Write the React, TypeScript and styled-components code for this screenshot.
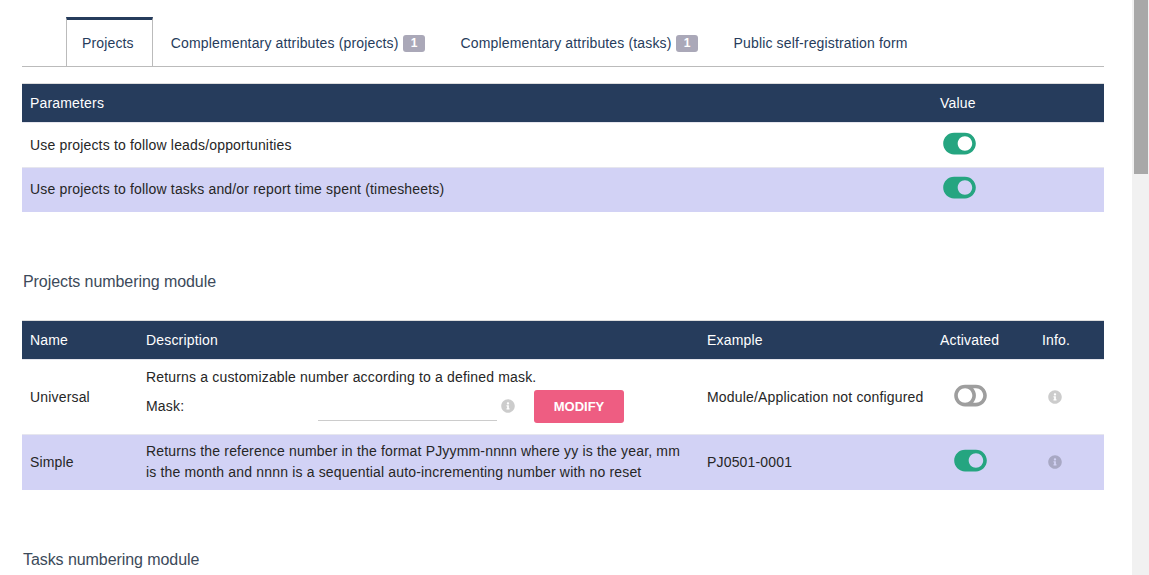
import React from "react";
import styled, { createGlobalStyle } from "styled-components";
import { FaInfoCircle, FaToggleOff, FaToggleOn } from "react-icons/fa";

const GlobalStyle = createGlobalStyle`
  html, body {
    margin: 0;
    height: 100%;
    overflow: hidden;
    background: #fff;
  }
  body {
    font-family: "Liberation Sans", Arial, sans-serif;
    font-size: 14px;
    letter-spacing: 0.17px;
    color: #262626;
  }
`;

const PROJECT_COLUMNS = "910px 172px";
const MODULE_COLUMNS = "116px 561px 233px 102px 70px";

const tabs = [
  { label: "Projects", active: true },
  { label: "Complementary attributes (projects)", badge: 1 },
  { label: "Complementary attributes (tasks)", badge: 1 },
  { label: "Public self-registration form" }
];

export default function App() {
  return (
    <Page>
      <GlobalStyle />
      <Content>
        <TabBar>
          {tabs.map(tab => (
            <Tab key={tab.label} $active={tab.active}>
              {tab.label}
              {tab.badge ? <Badge>{tab.badge}</Badge> : null}
            </Tab>
          ))}
        </TabBar>

        <Table>
          <HeadRow $columns={PROJECT_COLUMNS}>
            <Cell>Parameters</Cell>
            <Cell>Value</Cell>
          </HeadRow>
          <Row $columns={PROJECT_COLUMNS} $height={45}>
            <Cell>Use projects to follow leads/opportunities</Cell>
            <ToggleCell $inset={11}>
              <Toggle on />
            </ToggleCell>
          </Row>
          <Row $columns={PROJECT_COLUMNS} $height={45} $striped>
            <Cell>Use projects to follow tasks and/or report time spent (timesheets)</Cell>
            <ToggleCell $inset={11}>
              <Toggle on />
            </ToggleCell>
          </Row>
        </Table>

        <SectionTitle>Projects numbering module</SectionTitle>

        <Table>
          <HeadRow $columns={MODULE_COLUMNS}>
            <Cell>Name</Cell>
            <Cell>Description</Cell>
            <Cell>Example</Cell>
            <Cell>Activated</Cell>
            <Cell>Info.</Cell>
          </HeadRow>
          <Row $columns={MODULE_COLUMNS} $height={75}>
            <Cell>Universal</Cell>
            <MaskCell>
              <Description>Returns a customizable number according to a defined mask.</Description>
              <MaskRow>
                <MaskLabel>Mask:</MaskLabel>
                <MaskInput />
                <InfoIcon />
                <ModifyButton>Modify</ModifyButton>
              </MaskRow>
            </MaskCell>
            <Cell>Module/Application not configured</Cell>
            <ToggleCell $inset={22}>
              <Toggle />
            </ToggleCell>
            <InfoCell>
              <InfoIcon />
            </InfoCell>
          </Row>
          <Row $columns={MODULE_COLUMNS} $height={56} $striped>
            <Cell>Simple</Cell>
            <Cell>
              <Paragraph>
                Returns the reference number in the format PJyymm-nnnn where yy is the year, mm is
                the month and nnnn is a sequential auto-incrementing number with no reset
              </Paragraph>
            </Cell>
            <Cell>PJ0501-0001</Cell>
            <ToggleCell $inset={22}>
              <Toggle on />
            </ToggleCell>
            <InfoCell>
              <InfoIcon />
            </InfoCell>
          </Row>
        </Table>

        <SectionTitle>Tasks numbering module</SectionTitle>
      </Content>
      <ScrollTrack>
        <ScrollThumb />
      </ScrollTrack>
    </Page>
  );
}

const Toggle = ({ on }: { on?: boolean }) =>
  on ? <ToggleOn /> : <ToggleOff />;

const Page = styled.div`
  display: flex;
  height: 575px;
  overflow: hidden;
`;

const Content = styled.main`
  flex: 1;
  min-width: 0;
  padding: 17px 28px 0 22px;
`;

const TabBar = styled.nav`
  display: flex;
  height: 50px;
  box-sizing: border-box;
  padding-left: 44px;
  border-bottom: 1px solid #bbb;
`;

const Tab = styled.div<{ $active?: boolean }>`
  display: flex;
  align-items: center;
  box-sizing: border-box;
  height: 49px;
  padding: ${props => (props.$active ? "0 18px 0 15px" : "2px 17.5px 0 18px")};
  font-size: 14px;
  letter-spacing: 0.15px;
  color: #263c5c;
  border-style: solid;
  border-color: ${props => (props.$active ? "#263c5c #bbb" : "transparent")};
  border-width: ${props => (props.$active ? "3px 1px 0" : "0")};
`;

const Badge = styled.span`
  display: inline-block;
  margin: 1px 0 0 4.5px;
  width: 22px;
  height: 17px;
  line-height: 17px;
  text-align: center;
  font-size: 12px;
  font-weight: 700;
  letter-spacing: 0;
  color: #fff;
  background: #aaa8b8;
  border-radius: 3px;
`;

const Table = styled.section`
  margin-top: 16px;
  border-top: 1px solid #ddd;
`;

const Cell = styled.div`
  padding: 0 8px;
  min-width: 0;
`;

const MaskCell = styled(Cell)`
  padding-bottom: 4px;
`;

const HeadRow = styled.div<{ $columns: string }>`
  display: grid;
  grid-template-columns: ${props => props.$columns};
  align-items: center;
  height: 38px;
  background: #263c5c;
  color: #fff;
`;

const Row = styled.div<{ $columns: string; $height: number; $striped?: boolean }>`
  display: grid;
  grid-template-columns: ${props => props.$columns};
  align-items: center;
  box-sizing: border-box;
  height: ${props => props.$height}px;
  padding-bottom: ${props => (props.$striped ? "1px" : "0")};
  box-shadow: inset 0 1px 0 #e6e6ee;
  background: ${props => (props.$striped ? "#d2d2f5" : "#fff")};
`;

const ToggleCell = styled.div<{ $inset: number }>`
  display: flex;
  align-items: center;
  padding-left: ${props => props.$inset}px;
  padding-bottom: 3px;
`;

const ToggleOn = styled(FaToggleOn)`
  display: block;
  width: 33px;
  height: 29px;
  color: #25a580;
`;

const ToggleOff = styled(FaToggleOff)`
  display: block;
  width: 33px;
  height: 29px;
  color: #9e9e9e;
`;

const InfoCell = styled.div`
  display: flex;
  padding-left: 14px;
`;

const InfoIcon = styled(FaInfoCircle)`
  flex: none;
  display: block;
  width: 14px;
  height: 14px;
  color: rgba(0, 0, 0, 0.2);
`;

const Description = styled.div`
  line-height: 20px;
`;

const Paragraph = styled.div`
  line-height: 21px;
`;

const MaskRow = styled.div`
  display: flex;
  align-items: center;
  margin-top: 3px;
`;

const MaskLabel = styled.span`
  width: 172px;
`;

const MaskInput = styled.div`
  width: 179px;
  height: 29px;
  box-sizing: border-box;
  border-bottom: 1px solid #ccc;
  margin-right: 4px;
`;

const ModifyButton = styled.div`
  margin-left: 19px;
  width: 90px;
  height: 33px;
  line-height: 33px;
  text-align: center;
  font-size: 13px;
  font-weight: 700;
  letter-spacing: 0;
  text-transform: uppercase;
  color: #fff;
  background: #ee5d82;
  border-radius: 3px;
`;

const SectionTitle = styled.h2`
  margin: 60px 0 28px 1px;
  font-size: 16px;
  line-height: 20px;
  font-weight: 400;
  letter-spacing: -0.07px;
  color: #3c4a5a;
`;

const ScrollTrack = styled.aside`
  flex: none;
  width: 17px;
  background: #f1f1f1;
`;

const ScrollThumb = styled.div`
  width: 14px;
  height: 174px;
  background: #a8a8a8;
  margin-left: 2px;
`;
